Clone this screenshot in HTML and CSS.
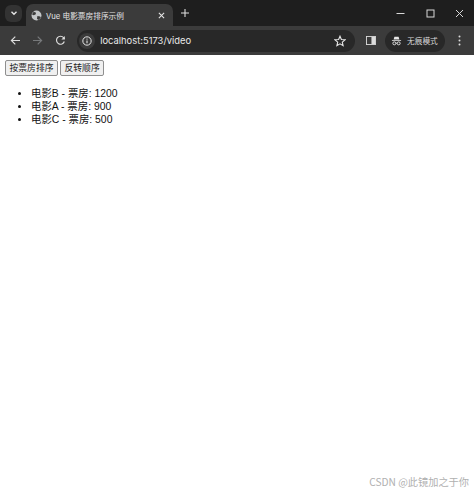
FILE: index.html
```html
<!DOCTYPE html>
<html lang="zh">
<head>
<meta charset="utf-8">
<title>Vue 电影票房排序示例</title>
<link rel="stylesheet" href="styles.css">
</head>
<body>
<header class="browser">
  <div class="tabstrip">
    <div class="tabsearch">
      <svg width="10" height="10" viewBox="0 0 10 10"><path d="M2.5 3.8 5 6.3l2.5-2.5" fill="none" stroke="#e6e6e6" stroke-width="1.4"/></svg>
    </div>
    <div class="tab">
      <svg class="favicon" width="11" height="11" viewBox="0 0 12 12"><circle cx="6" cy="6" r="5.4" fill="#c4c7c9"/><path d="M3 1.8 5.5 3 5 5 2.8 5.6 1 4.5ZM7 6.5l3 .5.8 1.5L8 11 6.5 9.5Z" fill="#3b3b3b"/></svg>
      <span class="tabtitle">Vue 电影票房排序示例</span>
      <svg class="tabclose" width="7" height="7" viewBox="0 0 8 8"><path d="M1 1l6 6M7 1 1 7" stroke="#e6e6e6" stroke-width="1.2"/></svg>
    </div>
    <svg class="newtab" width="8" height="8" viewBox="0 0 9 9"><path d="M4.5 0v9M0 4.5h9" stroke="#e0e0e0" stroke-width="1.2"/></svg>
    <div class="wincontrols">
      <svg width="9" height="9" viewBox="0 0 9 9"><path d="M.5 4.5h8" stroke="#d8d8d8"/></svg>
      <svg width="9" height="9" viewBox="0 0 9 9"><rect x="1" y="1" width="7" height="7" fill="none" stroke="#d8d8d8"/></svg>
      <svg width="9" height="9" viewBox="0 0 9 9"><path d="M1 1l7 7M8 1 1 8" stroke="#d8d8d8"/></svg>
    </div>
  </div>
  <div class="toolbar">
    <svg class="navicon" width="11" height="11" viewBox="0 0 11 11"><path d="M10 5.5H1.5M5.3 1.6 1.4 5.5l3.9 3.9" fill="none" stroke="#dcdcdc" stroke-width="1.2"/></svg>
    <svg class="navicon" width="11" height="11" viewBox="0 0 11 11"><path d="M1 5.5h8.5M5.7 1.6l3.9 3.9-3.9 3.9" fill="none" stroke="#77797b" stroke-width="1.2"/></svg>
    <svg class="navicon" width="11" height="11" viewBox="0 0 11 11"><path d="M9.3 6.5A4 4 0 1 1 8.6 2.7L9.6 3.8" fill="none" stroke="#dcdcdc" stroke-width="1.2"/><path d="M9.8 1v3.4H6.4" fill="#dcdcdc"/></svg>
    <div class="omnibox">
      <span class="infobadge"><svg width="10" height="10" viewBox="0 0 11 11"><circle cx="5.5" cy="5.5" r="4.6" fill="none" stroke="#e6e6e6" stroke-width="1.1"/><path d="M5.5 5v3" stroke="#e6e6e6" stroke-width="1.2"/><circle cx="5.5" cy="3.4" r=".7" fill="#e6e6e6"/></svg></span>
      <span class="url">localhost:5173/video</span>
      <svg class="star" width="12" height="12" viewBox="0 0 12 12"><path d="M6 1.2 7.4 4.5l3.6.3-2.7 2.4.8 3.5L6 8.8 2.9 10.7l.8-3.5L1 4.8l3.6-.3Z" fill="none" stroke="#e6e6e6" stroke-width="1.1"/></svg>
    </div>
    <svg class="sidepanel" width="10" height="9" viewBox="0 0 11 10"><rect x=".5" y=".5" width="10" height="9" fill="none" stroke="#dcdcdc"/><rect x="6" y="1" width="4" height="8" fill="#dcdcdc"/></svg>
    <div class="incognito">
      <svg width="11" height="10" viewBox="0 0 13 12"><path d="M4 1h5l1 3.2H3ZM1 4.8h11v1H1Z" fill="#e6e6e6"/><circle cx="3.9" cy="8.8" r="1.8" fill="none" stroke="#e6e6e6" stroke-width="1.1"/><circle cx="9.1" cy="8.8" r="1.8" fill="none" stroke="#e6e6e6" stroke-width="1.1"/><path d="M5.7 8.6h1.6" stroke="#e6e6e6"/></svg>
      <span class="incognito-label">无痕模式</span>
    </div>
    <svg class="menu" width="3" height="11" viewBox="0 0 3 11"><circle cx="1.5" cy="1.5" r="1" fill="#dcdcdc"/><circle cx="1.5" cy="5.5" r="1" fill="#dcdcdc"/><circle cx="1.5" cy="9.5" r="1" fill="#dcdcdc"/></svg>
  </div>
</header>
<main class="page">
  <div class="actions">
    <button class="btn">按票房排序</button>
    <button class="btn">反转顺序</button>
  </div>
  <ul class="movies">
    <li>电影B - 票房: 1200</li>
    <li>电影A - 票房: 900</li>
    <li>电影C - 票房: 500</li>
  </ul>
</main>
<div class="watermark">CSDN @此镜加之于你</div>
</body>
</html>
```
FILE: styles.css
```css
* { box-sizing: border-box; }
html, body { margin: 0; height: 100%; }
body {
  position: relative;
  width: 474px;
  height: 492px;
  overflow: hidden;
  background: #fff;
  color: #000;
  font-family: "Liberation Sans", "Noto Sans CJK SC", sans-serif;
}
.browser { height: 55px; display: flex; flex-direction: column; background: #3b3b3b; }
.tabstrip { height: 26px; display: flex; align-items: center; padding-left: 5px; background: #1e1e1e; }
.tabsearch {
  width: 17px; height: 17px; border-radius: 6px; background: #333;
  display: flex; align-items: center; justify-content: center; flex: none;
}
.tab {
  width: 147px; height: 22px; margin-left: 4px; align-self: flex-end;
  background: #3b3b3b; border-radius: 7px 7px 0 0;
  display: flex; align-items: center; padding: 0 8px 0 5px; gap: 4px;
  color: #e3e3e3; font-size: 7.7px; font-family: "Inter", "Noto Sans CJK SC", sans-serif;
}
.favicon { flex: none; }
.tabtitle { flex: 1; white-space: nowrap; }
.tabclose { flex: none; }
.newtab { margin-left: 8px; flex: none; }
.wincontrols { margin-left: auto; display: flex; gap: 20.5px; padding-right: 10px; align-items: center; }
.toolbar {
  height: 29px; background: #3b3b3b; display: flex; align-items: center;
  padding: 0 13px 0 10px;
}
.navicon { flex: none; margin-right: 11.4px; }
.omnibox {
  flex: 1; height: 22px; border-radius: 11px; background: #282828;
  display: flex; align-items: center; padding: 0 9px 0 2px; margin-right: 11px;
}
.infobadge {
  width: 16px; height: 16px; border-radius: 50%; background: #3b3b3b;
  display: flex; align-items: center; justify-content: center; margin-right: 5px; flex: none;
}
.url { flex: 1; color: #e8e8e8; font-size: 9.4px; font-family: "Inter", "Noto Sans", sans-serif; }
.star { flex: none; }
.sidepanel { flex: none; margin-right: 9px; }
.incognito {
  width: 60px; height: 22px; border-radius: 11px; background: #282828;
  display: flex; align-items: center; padding-left: 6px; gap: 5px;
  color: #d8d8d8; flex: none; margin-right: 13px;
}
.incognito-label {
  font-size: 7.7px; white-space: nowrap;
  font-family: "Noto Sans CJK SC", sans-serif;
}
.menu { flex: none; }
.page { padding: 5px 5px 0; }
.actions { display: flex; gap: 2px; }
.btn {
  height: 16px; padding: 0 3.5px; font-size: 8.8px; line-height: 1; white-space: nowrap;
  font-family: "Noto Sans CJK SC", sans-serif; color: #222;
  background: #f0f0f0; border: 1px solid #8f8f8f; border-radius: 2px;
}
.movies {
  margin: 11px 0 0; padding: 0 0 0 26px; font-size: 10.4px; line-height: 13.2px;
  color: #111;
  font-family: "Liberation Sans", "Noto Sans CJK SC", sans-serif;
}
.watermark {
  position: absolute; right: 5px; bottom: 3px;
  color: #b0b0b0; font-size: 10.2px;
  font-family: "Noto Sans CJK SC", sans-serif;
}
```
